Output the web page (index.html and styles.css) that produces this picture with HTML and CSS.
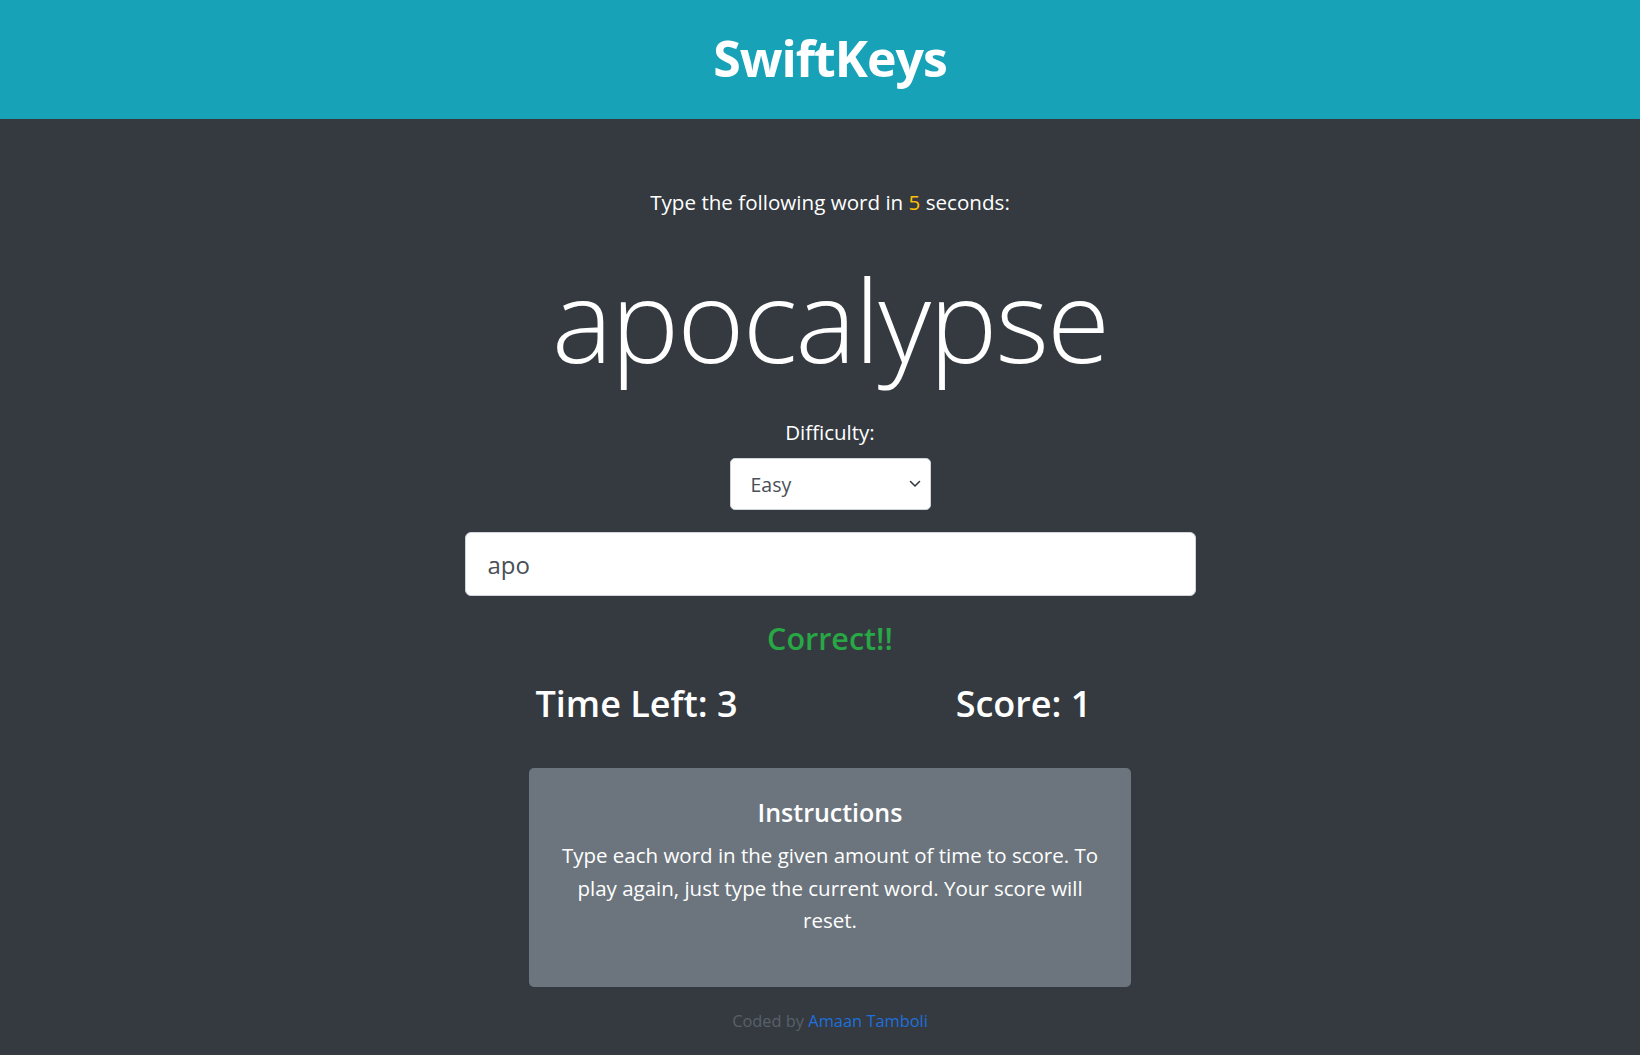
FILE: index.html
```html
<!DOCTYPE html>
<html lang="en">
<head>
<meta charset="utf-8">
<title>SwiftKeys</title>
<link rel="stylesheet" href="styles.css">
</head>
<body>
<header class="topbar">
  <h1 class="brand">SwiftKeys</h1>
</header>
<main class="game">
  <p class="prompt">Type the following word in <span class="secs">5</span> seconds:</p>
  <h2 class="word">apocalypse</h2>
  <label class="diff-label" for="difficulty">Difficulty:</label>
  <div class="select-wrap">
    <select id="difficulty" class="select">
      <option>Easy</option>
      <option>Medium</option>
      <option>Hard</option>
    </select>
    <svg class="chev" width="12" height="8" viewBox="0 0 12 8"><path d="M1.5 1.5 6 6l4.5-4.5" fill="none" stroke="#343a40" stroke-width="1.6" stroke-linecap="round" stroke-linejoin="round"/></svg>
  </div>
  <input class="word-input" type="text" value="apo">
  <p class="msg">Correct!!</p>
  <div class="stats">
    <h3 class="stat">Time Left: 3</h3>
    <h3 class="stat">Score: 1</h3>
  </div>
  <section class="card">
    <h4 class="card-title">Instructions</h4>
    <p class="card-text">Type each word in the given amount of time to score. To play again, just type the current word. Your score will reset.</p>
  </section>
  <footer class="credit">Coded by <a class="credit-link" href="#">Amaan Tamboli</a></footer>
</main>
</body>
</html>
```
FILE: styles.css
```css
* { box-sizing: border-box; }
html, body { margin: 0; padding: 0; }
body {
  background: #343a40;
  color: #fff;
  font-family: "Open Sans", "Noto Sans", "Liberation Sans", sans-serif;
  height: 1055px;
  overflow: hidden;
}
.topbar {
  background: #17a2b8;
  height: 119px;
  display: flex;
  align-items: center;
  justify-content: center;
  padding-left: 20px;
  padding-bottom: 4px;
}
.brand {
  margin: 0;
  font-size: 50px;
  font-weight: 700;
  letter-spacing: -1px;
  line-height: 1;
}
.game {
  display: flex;
  flex-direction: column;
  align-items: center;
  padding-left: 20px;
  padding-top: 68px;
}
.prompt {
  margin: 0;
  font-size: 20.6px;
  line-height: 30px;
}
.secs { color: #ffc107; }
.word {
  margin: 33px 0 0;
  font-size: 115px;
  font-weight: 300;
  line-height: 1.2;
  letter-spacing: -2px;
}
.diff-label {
  margin-top: 29px;
  font-size: 20.5px;
  line-height: 30px;
}
.select-wrap {
  position: relative;
  margin-top: 11px;
  width: 201px;
  height: 52px;
}
.select {
  appearance: none;
  -webkit-appearance: none;
  width: 100%;
  height: 100%;
  border: 1px solid #ced4da;
  border-radius: 5px;
  background: #fff;
  color: #495057;
  font-family: inherit;
  font-size: 19.5px;
  padding: 0 20px;
}
.chev {
  position: absolute;
  right: 10px;
  top: 22px;
}
.word-input {
  margin-top: 22px;
  width: 731px;
  height: 64px;
  border: 1px solid #ced4da;
  border-radius: 6px;
  background: #fff;
  color: #495057;
  font-family: inherit;
  font-size: 24px;
  padding: 0 22px;
  outline: none;
}
.msg {
  margin: 22px 0 0;
  color: #28a745;
  font-size: 30.5px;
  font-weight: 600;
  line-height: 40px;
}
.stats {
  margin-top: 22px;
  display: grid;
  grid-template-columns: 387px 387px;
  justify-items: center;
}
.stat {
  margin: 0;
  font-size: 36px;
  font-weight: 600;
  line-height: 48px;
}
.card {
  margin-top: 40px;
  width: 602px;
  height: 219px;
  background: #6c757d;
  border-radius: 5px;
  padding: 26px 26px;
  text-align: center;
}
.card-title {
  margin: 0;
  font-size: 25px;
  font-weight: 600;
  line-height: 36px;
}
.card-text {
  margin: 9px 0 0;
  font-size: 20.5px;
  line-height: 32.5px;
}
.credit {
  margin-top: 22px;
  color: #59606a;
  font-size: 16.4px;
  line-height: 24px;
}
.credit-link {
  color: #1f6fdc;
  text-decoration: none;
}
```
